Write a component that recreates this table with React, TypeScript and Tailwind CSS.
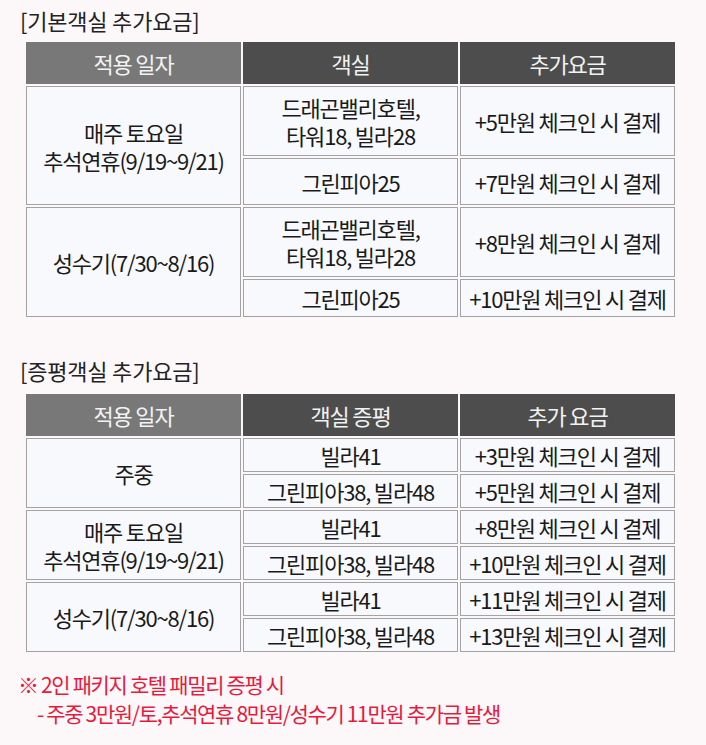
import React from "react";

const bodyCell =
  "border border-[#a3a3a3] bg-[#f7f9fd] text-center align-middle p-0 leading-[28px] text-[#1a1a1a]";
const headDark = "bg-[#4d4d4d] text-[#f2f2f2] text-center align-middle p-0 font-normal";
const headLight = "bg-[#787878] text-[#f2f2f2] text-center align-middle p-0 font-normal";

function Head({ cols }: { cols: string[] }) {
  return (
    <tr className="h-[42px]">
      <th className={headLight}>{cols[0]}</th>
      <th className={headDark}>{cols[1]}</th>
      <th className={headDark}>{cols[2]}</th>
    </tr>
  );
}

export default function App() {
  return (
    <div className="min-h-[745px] w-[706px] bg-[#fcf8f9] text-[#222] font-['Noto_Sans_CJK_KR',sans-serif] text-[22px] tracking-[-1.2px]">
      <div className="pl-[20px] pt-[6px] leading-[28px] tracking-[-0.2px]">[기본객실 추가요금]</div>
      <table className="ml-[24px] mt-[6px] w-[653px] table-fixed border-separate border-spacing-[2px]">
        <colgroup>
          <col className="w-[215px]" />
          <col className="w-[215px]" />
          <col className="w-[215px]" />
        </colgroup>
        <thead>
          <Head cols={["적용 일자", "객실", "추가요금"]} />
        </thead>
        <tbody>
          <tr className="h-[70px]">
            <td rowSpan={2} className={bodyCell}>
              매주 토요일
              <br />
              추석연휴(9/19~9/21)
            </td>
            <td className={bodyCell}>
              드래곤밸리호텔,
              <br />
              타워18, 빌라28
            </td>
            <td className={bodyCell}>+5만원 체크인 시 결제</td>
          </tr>
          <tr className="h-[47px]">
            <td className={bodyCell}>그린피아25</td>
            <td className={bodyCell}>+7만원 체크인 시 결제</td>
          </tr>
          <tr className="h-[70px]">
            <td rowSpan={2} className={bodyCell}>
              성수기(7/30~8/16)
            </td>
            <td className={bodyCell}>
              드래곤밸리호텔,
              <br />
              타워18, 빌라28
            </td>
            <td className={bodyCell}>+8만원 체크인 시 결제</td>
          </tr>
          <tr className="h-[38px]">
            <td className={bodyCell}>그린피아25</td>
            <td className={bodyCell}>+10만원 체크인 시 결제</td>
          </tr>
        </tbody>
      </table>

      <div className="pl-[20px] mt-[37px] leading-[28px] tracking-[-0.2px]">[증평객실 추가요금]</div>
      <table className="ml-[24px] mt-[8px] w-[653px] table-fixed border-separate border-spacing-[2px]">
        <colgroup>
          <col className="w-[215px]" />
          <col className="w-[215px]" />
          <col className="w-[215px]" />
        </colgroup>
        <thead>
          <Head cols={["적용 일자", "객실 증평", "추가 요금"]} />
        </thead>
        <tbody>
          <tr className="h-[34px]">
            <td rowSpan={2} className={bodyCell}>
              주중
            </td>
            <td className={bodyCell}>빌라41</td>
            <td className={bodyCell}>+3만원 체크인 시 결제</td>
          </tr>
          <tr className="h-[34px]">
            <td className={bodyCell}>그린피아38, 빌라48</td>
            <td className={bodyCell}>+5만원 체크인 시 결제</td>
          </tr>
          <tr className="h-[34px]">
            <td rowSpan={2} className={bodyCell}>
              매주 토요일
              <br />
              추석연휴(9/19~9/21)
            </td>
            <td className={bodyCell}>빌라41</td>
            <td className={bodyCell}>+8만원 체크인 시 결제</td>
          </tr>
          <tr className="h-[34px]">
            <td className={bodyCell}>그린피아38, 빌라48</td>
            <td className={bodyCell}>+10만원 체크인 시 결제</td>
          </tr>
          <tr className="h-[34px]">
            <td rowSpan={2} className={bodyCell}>
              성수기(7/30~8/16)
            </td>
            <td className={bodyCell}>빌라41</td>
            <td className={bodyCell}>+11만원 체크인 시 결제</td>
          </tr>
          <tr className="h-[34px]">
            <td className={bodyCell}>그린피아38, 빌라48</td>
            <td className={bodyCell}>+13만원 체크인 시 결제</td>
          </tr>
        </tbody>
      </table>

      <div className="mt-[16px] text-[#e8193d] leading-[29px] text-[21px] tracking-[-1.35px]">
        <div className="pl-[18px]">※ 2인 패키지 호텔 패밀리 증평 시</div>
        <div className="pl-[37px]">- 주중 3만원/토,추석연휴 8만원/성수기 11만원 추가금 발생</div>
      </div>
    </div>
  );
}
